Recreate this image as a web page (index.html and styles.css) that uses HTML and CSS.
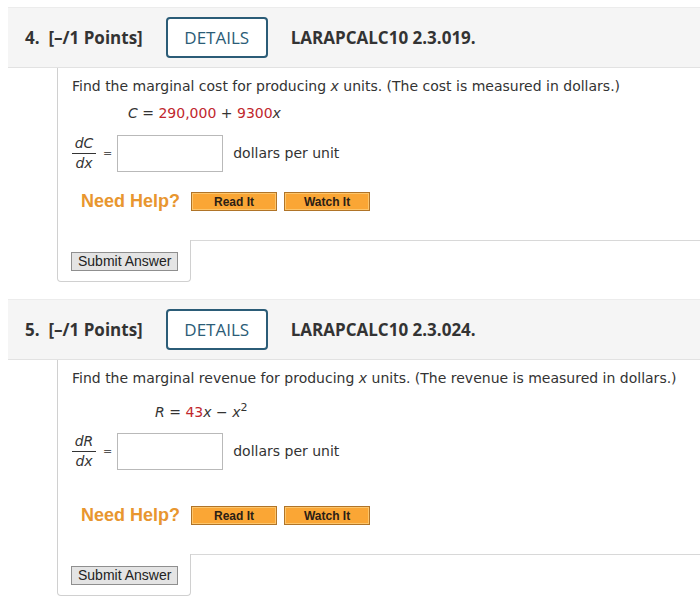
FILE: index.html
```html
<!DOCTYPE html>
<html>
<head>
<meta charset="utf-8">
<link rel="stylesheet" href="styles.css">
</head>
<body>
<div class="question q1">
  <div class="qhead">
    <span class="qnum">4.&nbsp; [–/1 Points]</span>
    <span class="details">DETAILS</span>
    <span class="qcode">LARAPCALC10 2.3.019.</span>
  </div>
  <div class="qbody">
    <p class="prompt">Find the marginal cost for producing <i>x</i> units. (The cost is measured in dollars.)</p>
    <p class="formula f1"><i>C</i> = <span class="red">290,000</span> + <span class="red">9300</span><i>x</i></p>
    <div class="answer">
      <span class="frac"><span class="num">dC</span><span class="den">dx</span></span>
      <span class="eq">=</span>
      <span class="box"></span>
      <span class="unit">dollars per unit</span>
    </div>
    <div class="help">
      <span class="needhelp">Need Help?</span>
      <span class="hbtn">Read It</span>
      <span class="hbtn">Watch It</span>
    </div>
  </div>
  <div class="qfoot">
    <div class="submitbox"><span class="submit">Submit Answer</span></div>
    <div class="footrest"></div>
  </div>
</div>

<div class="question q2">
  <div class="qhead">
    <span class="qnum">5.&nbsp; [–/1 Points]</span>
    <span class="details">DETAILS</span>
    <span class="qcode">LARAPCALC10 2.3.024.</span>
  </div>
  <div class="qbody">
    <p class="prompt">Find the marginal revenue for producing <i>x</i> units. (The revenue is measured in dollars.)</p>
    <p class="formula f2"><i>R</i> = <span class="red">43</span><i>x</i> − <i>x</i><sup>2</sup></p>
    <div class="answer">
      <span class="frac"><span class="num">dR</span><span class="den">dx</span></span>
      <span class="eq">=</span>
      <span class="box"></span>
      <span class="unit">dollars per unit</span>
    </div>
    <div class="help">
      <span class="needhelp">Need Help?</span>
      <span class="hbtn">Read It</span>
      <span class="hbtn">Watch It</span>
    </div>
  </div>
  <div class="qfoot">
    <div class="submitbox"><span class="submit">Submit Answer</span></div>
    <div class="footrest"></div>
  </div>
</div>
</body>
</html>
```
FILE: styles.css
```css
html, body {
  margin: 0;
  padding: 0;
  background: #fff;
}
body {
  padding-top: 7px;
  font-family: "DejaVu Sans", Verdana, sans-serif;
  color: #333;
}
.question + .question {
  margin-top: 17px;
}
.qhead {
  margin-left: 8px;
  height: 61px;
  background: #f5f5f5;
  border-top: 1px solid #ececec;
  border-bottom: 1px solid #e2e2e2;
  box-sizing: border-box;
  display: flex;
  align-items: center;
  padding-left: 17px;
  font-family: "Open Sans", sans-serif;
  color: #333;
}
.qnum {
  font-weight: 700;
  font-size: 17px;
}
.details {
  margin-left: 23px;
  width: 102px;
  height: 41px;
  box-sizing: border-box;
  border: 2px solid #2b5c77;
  border-radius: 4px;
  display: flex;
  align-items: center;
  justify-content: center;
  font-size: 17px;
  font-weight: 500;
  color: #2b5c77;
  background: #fff;
}
.qcode {
  margin-left: 23px;
  font-weight: 700;
  font-size: 17px;
}
.qbody {
  margin-left: 57px;
  border-left: 1px solid #d0d0d0;
  padding-left: 14px;
  padding-top: 8px;
  font-size: 14px;
}
.q1 .qbody { height: 164px; }
.q2 .qbody { height: 186px; }
p { margin: 0; }
.prompt {
  line-height: 20px;
}
.formula {
  line-height: 20px;
  margin-top: 7px;
}
.f1 { margin-left: 56px; }
.f2 { margin-left: 83px; margin-top: 14px; }
sup {
  font-size: 11px;
  line-height: 0;
  vertical-align: 6px;
}
.red { color: #c1272d; }
.answer {
  display: flex;
  align-items: center;
  margin-top: 11px;
}
.q2 .answer { margin-top: 10px; }
.frac {
  display: inline-flex;
  flex-direction: column;
  align-items: center;
  font-style: italic;
  font-size: 14px;
  width: 24px;
}
.num {
  line-height: 18px;
  border-bottom: 1px solid #333;
  width: 100%;
  text-align: center;
  padding-bottom: 1px;
}
.den {
  line-height: 18px;
}
.eq {
  font-size: 11px;
  margin-left: 7px;
  color: #555;
}
.box {
  margin-left: 5px;
  width: 106px;
  height: 37px;
  box-sizing: border-box;
  border: 1px solid #b9b9b9;
  background: #fff;
}
.unit {
  margin-left: 10px;
}
.help {
  display: flex;
  align-items: center;
  margin-left: 9px;
  margin-top: 19px;
}
.q2 .help { margin-top: 35px; }
.needhelp {
  font-family: "Liberation Sans", Arial, sans-serif;
  font-weight: 700;
  font-size: 18px;
  color: #e8962f;
}
.hbtn {
  margin-left: 11px;
  width: 86px;
  height: 19px;
  box-sizing: border-box;
  border: 1px solid #b07428;
  box-shadow: inset 0 0 0 1px #fcc56b;
  background: #faa635;
  font-family: "Liberation Sans", Arial, sans-serif;
  font-weight: 700;
  font-size: 12px;
  color: #2a2016;
  display: flex;
  align-items: center;
  justify-content: center;
}
.hbtn + .hbtn { margin-left: 7px; }
.qfoot {
  display: flex;
  margin-left: 57px;
}
.submitbox {
  width: 134px;
  height: 42px;
  box-sizing: border-box;
  border: 1px solid #d0d0d0;
  border-top: none;
  border-radius: 0 0 4px 4px;
  padding-left: 13px;
  padding-top: 11px;
}
.footrest {
  flex: 1;
  border-top: 1px solid #d8d8d8;
}
.submit {
  display: inline-block;
  height: 19px;
  line-height: 17px;
  box-sizing: border-box;
  padding: 0 6px;
  border: 1px solid #8f8f8f;
  background: #e4e4e4;
  font-family: "Liberation Sans", Arial, sans-serif;
  font-size: 14px;
  color: #222;
}
```
